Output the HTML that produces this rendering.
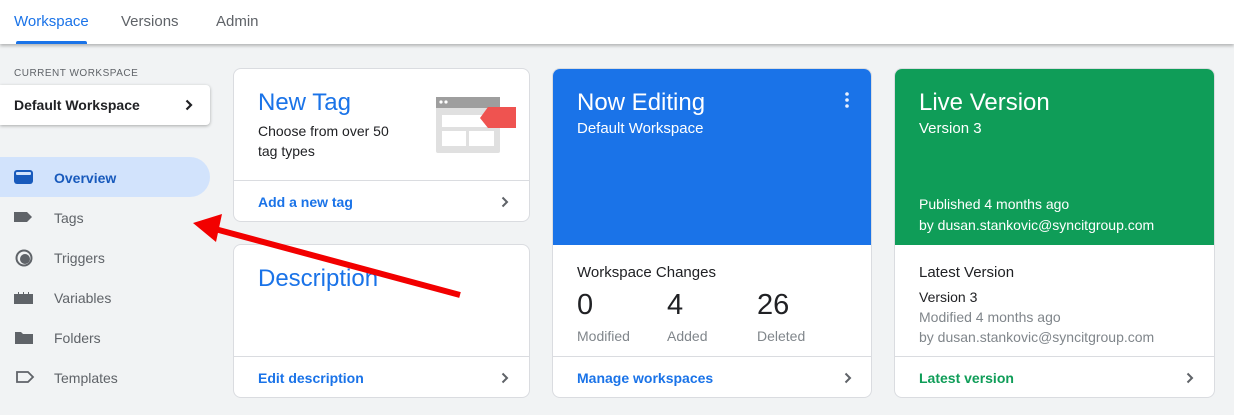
<!DOCTYPE html>
<html><head><style>
*{margin:0;padding:0;box-sizing:border-box}
body{width:1234px;height:415px;background:#f1f3f4;font-family:"Liberation Sans",Roboto,sans-serif;position:relative;overflow:hidden;color:#202124}
.top{position:absolute;left:0;top:0;width:1234px;height:44px;background:#fff;box-shadow:0 2px 3px rgba(0,0,0,.25);z-index:2}
.tab{position:absolute;top:13px;font-size:15px;color:#5f6368}
.abs{position:absolute}
.card{position:absolute;background:#fff;border:1px solid #dadce0;border-radius:8px;overflow:hidden}
.link{position:absolute;font-size:14px;color:#1a73e8;font-weight:bold}
.chev{position:absolute;width:8px;height:12px}
.nav{position:absolute;left:54px;font-size:14px;color:#5f6368}
.hr{position:absolute;left:0;right:0;height:1px;background:#dadce0}
</style></head><body>
<div class="top">
<div class="tab" style="left:14px;color:#1a73e8">Workspace</div>
<div class="abs" style="left:16px;top:41px;width:71px;height:3px;background:#1a73e8;border-radius:2px 2px 0 0"></div>
<div class="tab" style="left:121px">Versions</div>
<div class="tab" style="left:216px">Admin</div>
</div>
<div class="abs" style="left:14px;top:68px;font-size:10px;letter-spacing:.5px;color:#5f6368">CURRENT WORKSPACE</div>
<div class="abs" style="left:0;top:85px;width:210px;height:40px;background:#fff;border-radius:0 4px 4px 0;box-shadow:0 1px 3px rgba(0,0,0,.3)">
<div class="abs" style="left:14px;top:12px;font-size:14px;font-weight:bold;color:#202124">Default Workspace</div>
<svg class="abs" style="left:185px;top:14px" width="8" height="12"><path d="M1.5 1.5L6 6l-4.5 4.5" fill="none" stroke="#202124" stroke-width="2.2"/></svg></div>
<div class="abs" style="left:0;top:157px;width:210px;height:40px;background:#d2e3fc;border-radius:0 20px 20px 0"></div>
<svg class="abs" style="left:0;top:0" width="60" height="415">
<rect x="14" y="170" width="19" height="14" rx="3" fill="#185abc"/><rect x="16" y="172" width="15" height="3" fill="#d2e3fc" rx="1"/>
<path d="M14 212h13l5 5-5 5H14z" fill="#5f6368"/>
<circle cx="24" cy="258" r="7.5" fill="none" stroke="#5f6368" stroke-width="2"/><circle cx="25" cy="259" r="5" fill="#5f6368"/>
<path d="M14 294h4v-2h1v2h4v-2h1v2h4v-2h1v2h4v10H14z" fill="#5f6368"/>
<path d="M15 332h6l2 2h10v10H15z" fill="#5f6368"/>
<path d="M17 372h11l5 5-5 5H17z" fill="none" stroke="#5f6368" stroke-width="1.8"/>
</svg>
<div class="nav" style="top:170px;color:#185abc;font-weight:bold">Overview</div>
<div class="nav" style="top:210px">Tags</div>
<div class="nav" style="top:250px">Triggers</div>
<div class="nav" style="top:290px">Variables</div>
<div class="nav" style="top:330px">Folders</div>
<div class="nav" style="top:370px">Templates</div>

<div class="card" style="left:233px;top:68px;width:297px;height:154px">
<div class="abs" style="left:24px;top:20px;font-size:24px;color:#1a73e8">New Tag</div>
<div class="abs" style="left:24px;top:52px;font-size:14px;line-height:20px;width:150px">Choose from over 50 tag types</div>
<svg class="abs" style="left:202px;top:28px" width="82" height="58"><rect x="0" y="0" width="64" height="56" rx="2" fill="#e0e0e0"/><rect x="0" y="0" width="64" height="11" fill="#9e9e9e"/><circle cx="5" cy="5" r="1.6" fill="#fff"/><circle cx="10" cy="5" r="1.6" fill="#fff"/><rect x="6" y="18" width="52" height="12" fill="#fff"/><rect x="6" y="34" width="24" height="15" fill="#fff"/><rect x="33" y="34" width="25" height="15" fill="#fff"/><path d="M52 10h28v21H52l-8-10z" fill="#ef5350"/></svg>
<div class="hr" style="top:111px"></div>
<div class="link" style="left:24px;top:125px">Add a new tag</div><svg class="chev" style="left:267px;top:127px"><path d="M1.5 1.5L6 6l-4.5 4.5" fill="none" stroke="#5f6368" stroke-width="2"/></svg>
</div>
<div class="card" style="left:233px;top:244px;width:297px;height:154px">
<div class="abs" style="left:24px;top:20px;font-size:24px;color:#1a73e8">Description</div>
<div class="hr" style="top:111px"></div>
<div class="link" style="left:24px;top:125px">Edit description</div><svg class="chev" style="left:267px;top:127px"><path d="M1.5 1.5L6 6l-4.5 4.5" fill="none" stroke="#5f6368" stroke-width="2"/></svg>
</div>
<div class="card" style="left:552px;top:68px;width:320px;height:330px">
<div class="abs" style="left:0;top:0;right:0;height:176px;background:#1a73e8"></div>
<div class="abs" style="left:24px;top:20px;font-size:24px;color:#fff">Now Editing</div>
<div class="abs" style="left:24px;top:51px;font-size:15px;color:#fff">Default Workspace</div>
<svg class="abs" style="left:290px;top:22px" width="8" height="18"><circle cx="4" cy="3" r="1.8" fill="#e8f0fe"/><circle cx="4" cy="9" r="1.8" fill="#e8f0fe"/><circle cx="4" cy="15" r="1.8" fill="#e8f0fe"/></svg>
<div class="abs" style="left:24px;top:195px;font-size:15px">Workspace Changes</div>
<div class="abs" style="left:24px;top:220px;font-size:29px">0</div>
<div class="abs" style="left:114px;top:220px;font-size:29px">4</div>
<div class="abs" style="left:204px;top:220px;font-size:29px">26</div>
<div class="abs" style="left:24px;top:259px;font-size:14px;color:#80868b">Modified</div>
<div class="abs" style="left:114px;top:259px;font-size:14px;color:#80868b">Added</div>
<div class="abs" style="left:204px;top:259px;font-size:14px;color:#80868b">Deleted</div>
<div class="hr" style="top:287px"></div>
<div class="link" style="left:24px;top:301px">Manage workspaces</div><svg class="chev" style="left:291px;top:303px"><path d="M1.5 1.5L6 6l-4.5 4.5" fill="none" stroke="#5f6368" stroke-width="2"/></svg>
</div>
<div class="card" style="left:894px;top:68px;width:321px;height:330px">
<div class="abs" style="left:0;top:0;right:0;height:176px;background:#0f9d58"></div>
<div class="abs" style="left:24px;top:20px;font-size:24px;color:#fff">Live Version</div>
<div class="abs" style="left:24px;top:51px;font-size:15px;color:#fff">Version 3</div>
<div class="abs" style="left:24px;top:127px;font-size:14px;color:#fff">Published 4 months ago</div>
<div class="abs" style="left:24px;top:148px;font-size:14px;color:#fff">by dusan.stankovic@syncitgroup.com</div>
<div class="abs" style="left:24px;top:195px;font-size:15px">Latest Version</div>
<div class="abs" style="left:24px;top:220px;font-size:14px">Version 3</div>
<div class="abs" style="left:24px;top:240px;font-size:14px;color:#80868b">Modified 4 months ago</div>
<div class="abs" style="left:24px;top:260px;font-size:14px;color:#80868b">by dusan.stankovic@syncitgroup.com</div>
<div class="hr" style="top:287px"></div>
<div class="link" style="left:24px;top:301px;color:#0f9d58">Latest version</div><svg class="chev" style="left:291px;top:303px"><path d="M1.5 1.5L6 6l-4.5 4.5" fill="none" stroke="#5f6368" stroke-width="2"/></svg>
</div>
<svg class="abs" style="left:0;top:0;z-index:3" width="1234" height="415"><line x1="460" y1="295" x2="215" y2="229" stroke="#f20000" stroke-width="6"/><path d="M193 223L222 214L216 242z" fill="#f20000"/></svg>
</body></html>
